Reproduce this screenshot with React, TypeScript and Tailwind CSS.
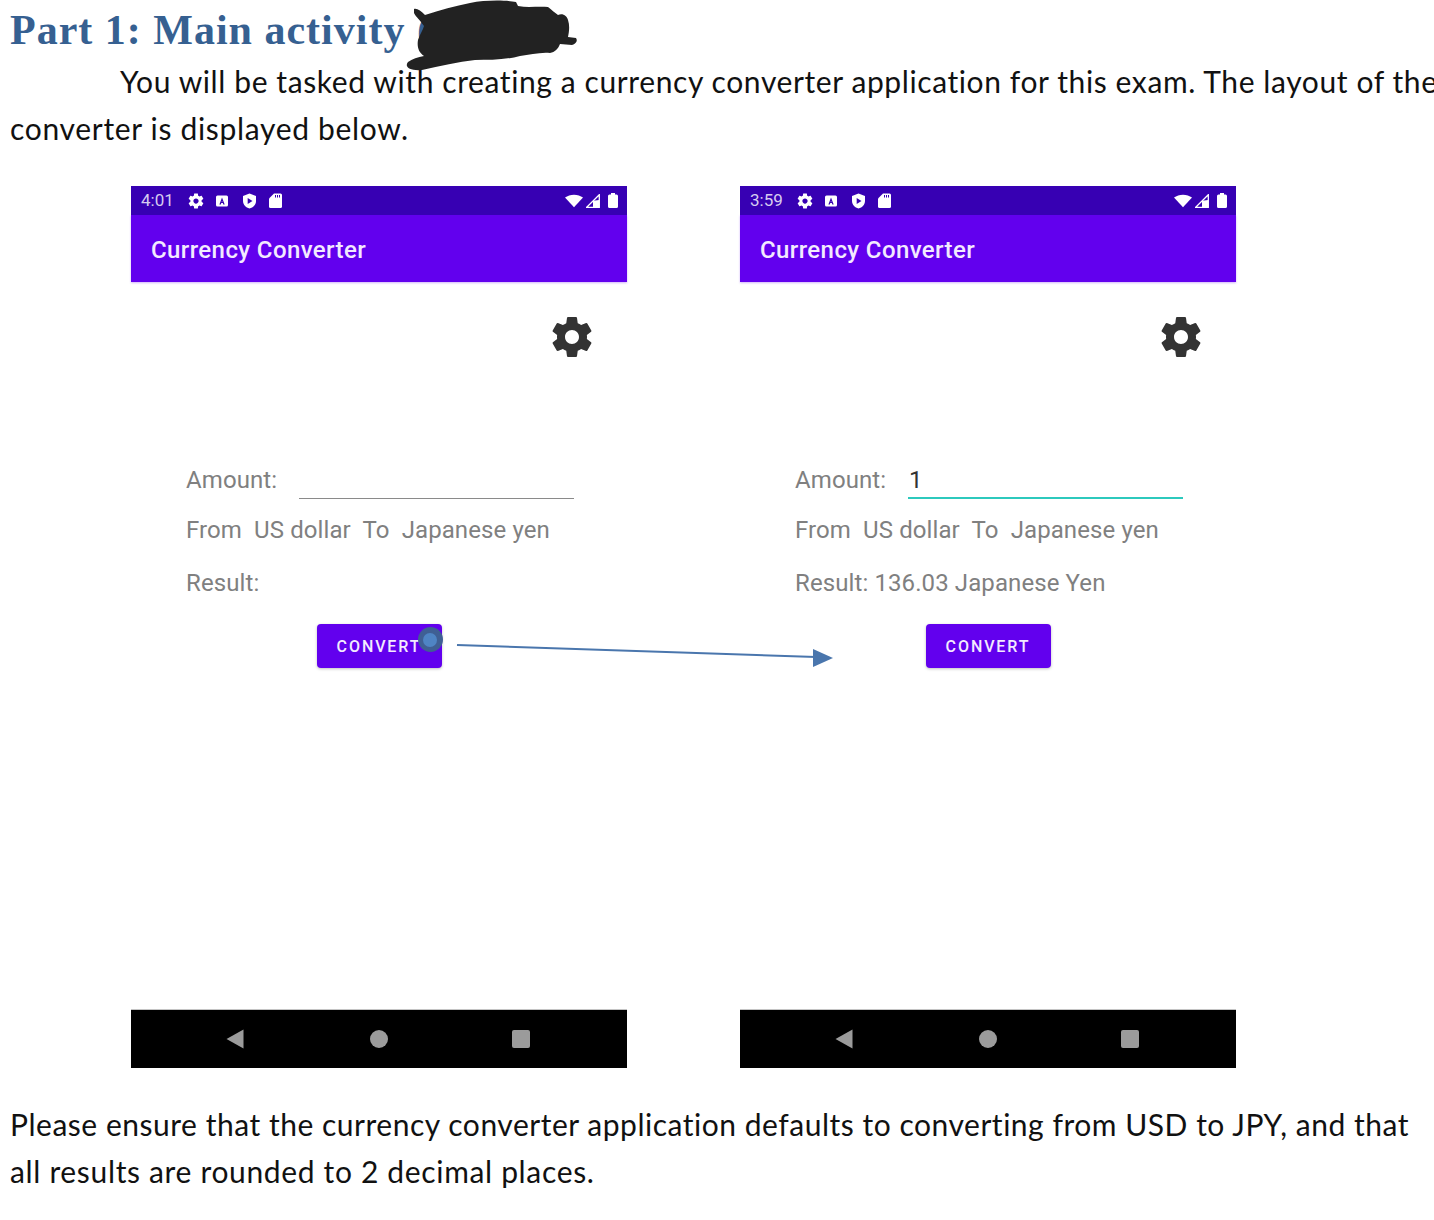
const bodyFont = "font-['Lato','Noto_Sans',sans-serif] text-[30px] leading-[47px] text-[#111] [font-variant-ligatures:none]";

function Gear({ className }: { className: string }) {
  return (
    <svg viewBox="0 0 24 24" fill="currentColor" className={className} aria-hidden="true">
      <path d="M19.43 12.98c.04-.32.07-.64.07-.98s-.03-.66-.07-.98l2.11-1.65c.19-.15.24-.42.12-.64l-2-3.46c-.12-.22-.39-.3-.61-.22l-2.49 1c-.52-.4-1.08-.73-1.69-.98l-.38-2.65C14.46 2.18 14.25 2 14 2h-4c-.25 0-.46.18-.49.42l-.38 2.65c-.61.25-1.17.59-1.69.98l-2.49-1c-.23-.09-.49 0-.61.22l-2 3.46c-.13.22-.07.49.12.64l2.11 1.65c-.04.32-.07.65-.07.98s.03.66.07.98l-2.11 1.65c-.19.15-.24.42-.12.64l2 3.46c.12.22.39.3.61.22l2.49-1c.52.4 1.08.73 1.69.98l.38 2.65c.03.24.24.42.49.42h4c.25 0 .46-.18.49-.42l.38-2.65c.61-.25 1.17-.59 1.69-.98l2.49 1c.23.09.49 0 .61-.22l2-3.46c.12-.22.07-.49-.12-.64l-2.11-1.65zM12 15.5c-1.93 0-3.5-1.57-3.5-3.5s1.57-3.5 3.5-3.5 3.5 1.57 3.5 3.5-1.57 3.5-3.5 3.5z" />
    </svg>
  );
}

function StatusIcons() {
  return (
    <div className="ml-[13px] flex items-center gap-[13px]">
      <Gear className="-mr-[3px] size-[18px] text-white" />
      <svg viewBox="0 0 14 14" className="size-[14px]" aria-hidden="true">
        <rect x="1" y="1.5" width="12" height="11" rx="1.5" fill="#fff" />
        <path d="M7 3.6 4.4 10.4h1.4l.5-1.4h1.5l.5 1.4h1.4zM6.7 7.9 7 6.8l.4 1.1z" fill="#3700b3" />
      </svg>
      <svg viewBox="0 0 14 16" className="h-[16px] w-[15px]" aria-hidden="true">
        <path d="M7 .5 13.5 3v5c0 3.7-2.8 6.6-6.5 7.5C3.300 14.600.5 11.700.5 8V3z" fill="#fff" />
        <path d="M5.200 5 10 8l-4.800 3z" fill="#3700b3" />
      </svg>
      <svg viewBox="0 0 13 15" className="-ml-[1px] h-[15px] w-[13px]" aria-hidden="true">
        <path d="M5 .5h6.500A1.500 1.500 0 0 1 13 2v11.500a1.500 1.500 0 0 1-1.500 1.500h-10A1.500 1.500 0 0 1 0 13.500V5.500z" fill="#fff" />
        <path d="M6 2h1v2.500H6zM8 2h1v2.500H8zM10 2h1v2.500h-1z" fill="#3700b3" />
      </svg>
    </div>
  );
}

function SystemIcons() {
  return (
    <div className="flex items-center gap-[3px]">
      <svg viewBox="0 0 20 14" className="h-[14px] w-[18px]" aria-hidden="true">
        <path d="M10 14 0 3.200C2.700 1.200 6.200 0 10 0s7.300 1.200 10 3.200z" fill="#fff" />
      </svg>
      <svg viewBox="0 0 14 14" className="size-[14px]" aria-hidden="true">
        <path d="M13.300.7v12.600H.7z" fill="none" stroke="#fff" strokeWidth="1.300" />
        <path d="M13.300 6v7.300H7V6.800z" fill="#fff" />
      </svg>
      <svg viewBox="0 0 10 15" className="ml-[5px] h-[15px] w-[10px]" aria-hidden="true">
        <path d="M3 0h4v1.500h1.500A1.500 1.500 0 0 1 10 3v10.500A1.500 1.500 0 0 1 8.500 15h-7A1.500 1.500 0 0 1 0 13.500V3a1.500 1.500 0 0 1 1.500-1.500H3z" fill="#fff" />
      </svg>
    </div>
  );
}

function NavBar() {
  return (
    <div className="flex h-[59px] items-center border-t border-[#c4c4c4] bg-black pb-px pl-[95px]">
      <svg viewBox="0 0 18 20" className="h-[20px] w-[18px]" aria-hidden="true">
        <path d="M17.500 0.500v19L0.500 10z" fill="#9b9b9b" />
      </svg>
      <span className="ml-[126px] size-[18px] rounded-full bg-[#9b9b9b]" />
      <span className="ml-[124px] size-[18px] rounded-[2px] bg-[#9b9b9b]" />
    </div>
  );
}

interface PhoneProps {
  time: string;
  amount?: string;
  result: string;
  focused?: boolean;
  touched?: boolean;
}

function Phone({ time, amount, result, focused, touched }: PhoneProps) {
  const rowText = "font-['Roboto',sans-serif] text-[24px] leading-[32px] tracking-[0.1px] text-[#808080]";
  return (
    <div className="flex h-[882px] w-[496px] flex-col bg-white">
      <div className="flex h-[29px] items-center justify-between bg-[#3700b3] pl-[10px] pr-[9px]">
        <div className="flex items-center">
          <span className="pt-px font-['Roboto',sans-serif] text-[17px] text-[#d6ccf0]">{time}</span>
          <StatusIcons />
        </div>
        <SystemIcons />
      </div>
      <div className="flex h-[67px] items-center bg-[#6200ee] pl-[20px] pt-[3px] shadow-[0_1px_2px_rgba(98,0,238,0.3)]">
        <span className="font-['Roboto',sans-serif] text-[24px] font-medium tracking-[0.4px] text-[#f3eaff]">Currency Converter</span>
      </div>
      <div className="flex justify-end pr-[31px] pt-[31px]">
        <Gear className="size-[48px] text-[#333]" />
      </div>
      <div className={`mt-[102px] flex items-center pl-[55px] ${rowText}`}>
        <span className="w-[113px] -translate-y-px">Amount:</span>
        <div className={`flex h-[36px] w-[275px] items-center border-b pl-[1px] ${focused ? "border-b-2 border-[#2cc9bd]" : "border-[#8a8a8a]"}`}>
          <span className="text-[#333]">{amount}</span>
        </div>
      </div>
      <div className={`mt-[15px] flex whitespace-pre pl-[55px] ${rowText}`}>From  US dollar  To  Japanese yen</div>
      <div className={`mt-[21px] pl-[55px] ${rowText}`}>{result}</div>
      <div className="mt-[25px] flex justify-center">
        <div className="relative flex h-[44px] w-[125px] items-center justify-center rounded-[4px] bg-[#6200ee] pt-[2px] font-['Roboto',sans-serif] text-[16px] font-medium tracking-[1.9px] text-[#f3eaff] shadow-[0_1px_3px_rgba(0,0,0,0.25)]">
          CONVERT
          {touched && (
            <span className="absolute right-[-1px] top-[3px] flex size-[25px] items-center justify-center rounded-full bg-[#3f5f94]">
              <span className="size-[14px] rounded-full bg-[#4f84c4]" />
            </span>
          )}
        </div>
      </div>
      <div className="flex-1" />
      <NavBar />
    </div>
  );
}

export default function App() {
  return (
    <div className="relative h-[1220px] w-[1434px] overflow-hidden bg-white">
      <h1 className="h-[58px] whitespace-nowrap pl-[10px] font-['Liberation_Serif',serif] text-[42px] leading-[60px] font-bold tracking-[1px] text-[#366091]">
        Part 1: Main activity (
      </h1>
      <div className={`whitespace-nowrap pl-[10px] ${bodyFont}`}>
        <p className="pl-[110px] tracking-[0.6px]">You will be tasked with creating a currency converter application for this exam. The layout of the</p>
        <p className="tracking-[0.68px]">converter is displayed below.</p>
      </div>
      <div className="mt-[34px] flex gap-[113px] pl-[131px]">
        <Phone time="4:01" result="Result:" touched />
        <Phone time="3:59" amount="1" result="Result: 136.03 Japanese Yen" focused />
      </div>
      <div className={`mt-[33px] whitespace-nowrap pl-[10px] ${bodyFont}`}>
        <p className="tracking-[0.52px]">Please ensure that the currency converter application defaults to converting from USD to JPY, and that</p>
        <p className="tracking-[0.66px]">all results are rounded to 2 decimal places.</p>
      </div>

      {/* redaction scribble over the heading */}
      <svg viewBox="0 0 1434 1220" className="pointer-events-none absolute inset-0 size-full" aria-hidden="true">
        <path
          d="M414 9 C417 8 421 11 425 15 C440 10 455 6 470 3 C485 0 505 0 516 2 L518 6 C528 8 538 6 548 7 C552 10 555 13 558 15 C563 13 567 16 568 20 C570 26 569 32 568 37 L576 38 C578 41 576 44 572 45 L560 44 C558 49 555 52 550 53 C540 52 530 55 520 56 C505 60 490 60 475 60 C458 62 440 66 422 70 C410 71 404 67 408 62 C412 59 418 57 424 56 C418 52 417 46 418 40 C420 34 423 30 424 26 C420 20 416 17 414 13 Z"
          fill="#222"
        />
        <line x1="457" y1="645" x2="816" y2="657" stroke="#4a76ad" strokeWidth="2" />
        <path d="M813 649 833 658 813 667z" fill="#4a76ad" />
      </svg>
    </div>
  );
}
